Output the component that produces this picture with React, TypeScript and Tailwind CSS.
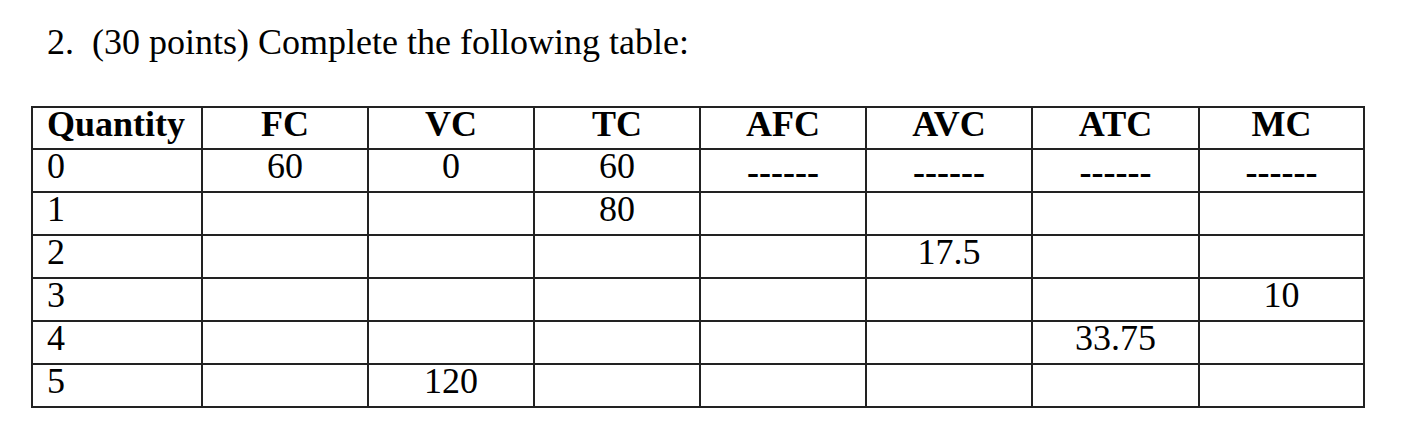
const HEADERS = ["Quantity", "FC", "VC", "TC", "AFC", "AVC", "ATC", "MC"];

const DASH = "------";

// one entry per row, 8 cells each; "" = blank to fill in
const ROWS: string[][] = [
  ["0", "60", "0", "60", DASH, DASH, DASH, DASH],
  ["1", "", "", "80", "", "", "", ""],
  ["2", "", "", "", "", "17.5", "", ""],
  ["3", "", "", "", "", "", "", "10"],
  ["4", "", "", "", "", "", "33.75", ""],
  ["5", "", "120", "", "", "", "", ""],
];

const COL_WIDTHS = ["w-[170px]", "w-[166px]", "w-[166px]", "w-[166px]", "w-[166px]", "w-[166px]", "w-[167px]", "w-[165px]"];

function Cell({ value, first }: { value: string; first: boolean }) {
  if (value === DASH) {
    return (
      <td className="border-2 border-[#222] p-0 align-top text-center leading-[32px]">
        <span className="inline-block translate-y-[6px] font-bold">{value}</span>
      </td>
    );
  }
  return (
    <td
      className={
        "border-2 border-[#222] p-0 align-top leading-[32px] " +
        (first ? "pl-[14px] text-left" : "text-center")
      }
    >
      {value}
    </td>
  );
}

export default function App() {
  return (
    <div className="h-[442px] w-[1406px] bg-white text-black" style={{ fontFamily: '"Liberation Serif", "Times New Roman", serif' }}>
      <div className="whitespace-nowrap pl-[47px] pt-[22px] text-[36px] leading-[40px]">
        2.&nbsp; (30 points) Complete the following table:
      </div>

      <table className="ml-[31px] mt-[44px] table-fixed border-collapse text-[36px]">
        <colgroup>
          {COL_WIDTHS.map((w, i) => (
            <col key={i} className={w} />
          ))}
        </colgroup>
        <thead>
          <tr className="h-[42px]">
            {HEADERS.map((h, i) => (
              <th
                key={h}
                className={
                  "border-2 border-[#222] p-0 align-top font-bold leading-[32px] " +
                  (i === 0 ? "pl-[14px] text-left" : "text-center")
                }
              >
                {h}
              </th>
            ))}
          </tr>
        </thead>
        <tbody>
          {ROWS.map((row, r) => (
            <tr key={r} className="h-[43px]">
              {row.map((v, c) => (
                <Cell key={c} value={v} first={c === 0} />
              ))}
            </tr>
          ))}
        </tbody>
      </table>
    </div>
  );
}
